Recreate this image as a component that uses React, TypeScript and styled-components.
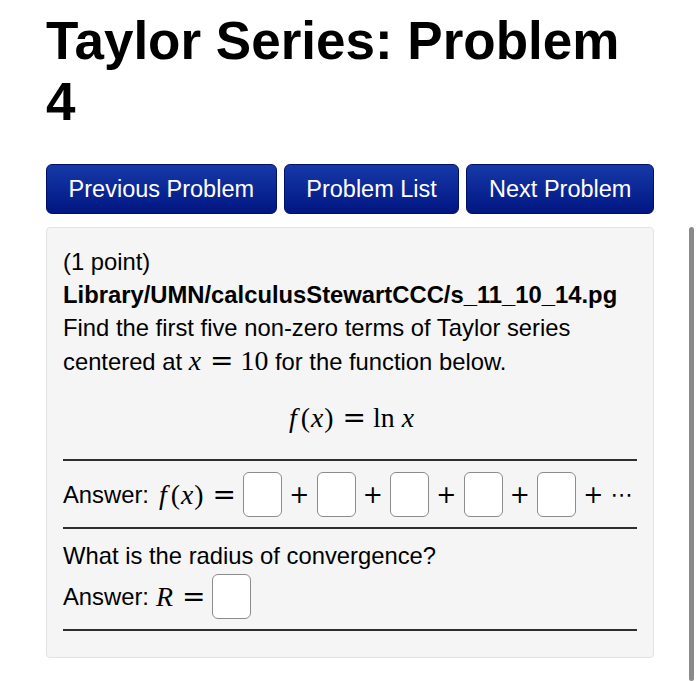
import React from 'react';
import styled, { createGlobalStyle } from 'styled-components';

const GlobalStyle = createGlobalStyle`
  html, body {
    margin: 0;
    padding: 0;
    background: #ffffff;
  }
  body {
    font-family: "Liberation Sans", Arial, sans-serif;
    color: #000000;
  }
`;

const Page = styled.div`
  padding: 10px 46px 0;
`;

const Title = styled.h1`
  margin: 0;
  font-size: 53px;
  line-height: 61px;
  font-weight: bold;
`;

const NavBar = styled.div`
  display: flex;
  gap: 7px;
  margin-top: 32px;
`;

const NavButton = styled.button`
  flex: 1 1 auto;
  min-width: 0;
  height: 50px;
  padding: 0 21px;
  border: 1px solid #00106a;
  border-radius: 6px;
  background: linear-gradient(#1639a8, #001682);
  color: #ffffff;
  font-family: "Liberation Sans", Arial, sans-serif;
  font-size: 23.5px;
  white-space: nowrap;
`;

const Panel = styled.div`
  margin-top: 13px;
  background: #f5f5f5;
  border: 1px solid #e3e3e3;
  border-radius: 4px;
  padding: 17px 16px 26px;
`;

const Line = styled.div<{ $bold?: boolean; $top?: number }>`
  font-size: 23.8px;
  line-height: 33px;
  font-weight: ${p => (p.$bold ? 'bold' : 'normal')};
  margin-top: ${p => p.$top ?? 0}px;
`;

const DisplayMath = styled.div`
  text-align: center;
  line-height: 33px;
  margin: 23px 0 21px;
`;

const Rule = styled.div<{ $top?: number }>`
  height: 2px;
  background: #2e2e2e;
  margin-top: ${p => p.$top ?? 0}px;
`;

const AnswerRow = styled.div<{ $top?: number }>`
  display: flex;
  align-items: center;
  height: 45px;
  margin-top: ${p => p.$top ?? 11}px;
`;

const Label = styled.span`
  font-size: 23.8px;
  margin-right: 7px;
`;

const MathVar = styled.span<{ $pad?: number; $gap?: number }>`
  font-family: "Liberation Serif", "Times New Roman", serif;
  font-style: italic;
  font-size: 27.8px;
  padding: 0 ${p => p.$pad ?? 0}px;
  margin-left: ${p => p.$gap ?? 0}px;
`;

const MathText = styled.span<{ $gap?: number }>`
  font-family: "Liberation Serif", "Times New Roman", serif;
  font-size: 27.8px;
  margin-left: ${p => p.$gap ?? 0}px;
`;

const Rel = styled.span`
  font-family: "DejaVu Serif", serif;
  font-size: 28px;
  margin: 0 7px 0 9px;
`;

const Plus = styled.span`
  width: 34.5px;
  text-align: center;
  font-family: "DejaVu Sans", sans-serif;
  font-size: 24px;
`;

const Dots = styled.span`
  font-family: "DejaVu Sans", sans-serif;
  font-size: 22px;
`;

const AnswerBox = styled.input`
  box-sizing: border-box;
  width: 39px;
  height: 45px;
  margin: 0;
  padding: 0;
  border: 1.5px solid #8c8c8c;
  border-radius: 6px;
  background: #ffffff;
  outline: none;
`;

const ScrollThumb = styled.div`
  position: fixed;
  top: 227px;
  right: 6px;
  bottom: 0;
  width: 5px;
  border-radius: 3px;
  background: #8a8a8a;
`;

const Fx = () => (
  <>
    <MathVar $pad={3}>f</MathVar>
    <MathText $gap={1}>(</MathText>
    <MathVar $pad={1}>x</MathVar>
    <MathText>)</MathText>
  </>
);

export default function App() {
  const terms = [0, 1, 2, 3, 4];

  return (
    <Page>
      <GlobalStyle />
      <Title>Taylor Series: Problem 4</Title>

      <NavBar>
        <NavButton>Previous Problem</NavButton>
        <NavButton>Problem List</NavButton>
        <NavButton>Next Problem</NavButton>
      </NavBar>

      <Panel>
        <Line>(1 point)</Line>
        <Line $bold>Library/UMN/calculusStewartCCC/s_11_10_14.pg</Line>
        <Line>Find the first five non-zero terms of Taylor series</Line>
        <Line>
          centered at <MathVar>x</MathVar>
          <Rel>=</Rel>
          <MathText>10</MathText> for the function below.
        </Line>

        <DisplayMath>
          <Fx />
          <Rel>=</Rel>
          <MathText>ln</MathText>
          <MathVar $gap={7}>x</MathVar>
        </DisplayMath>

        <Rule />
        <AnswerRow>
          <Label>Answer:</Label>
          <Fx />
          <Rel>=</Rel>
          {terms.map(t => (
            <React.Fragment key={t}>
              <AnswerBox type="text" />
              <Plus>+</Plus>
            </React.Fragment>
          ))}
          <Dots>⋯</Dots>
        </AnswerRow>
        <Rule $top={10} />

        <Line $top={10}>What is the radius of convergence?</Line>
        <AnswerRow $top={2}>
          <Label>Answer:</Label>
          <MathVar>R</MathVar>
          <Rel>=</Rel>
          <AnswerBox type="text" />
        </AnswerRow>
        <Rule $top={10} />
      </Panel>
      <ScrollThumb />
    </Page>
  );
}
